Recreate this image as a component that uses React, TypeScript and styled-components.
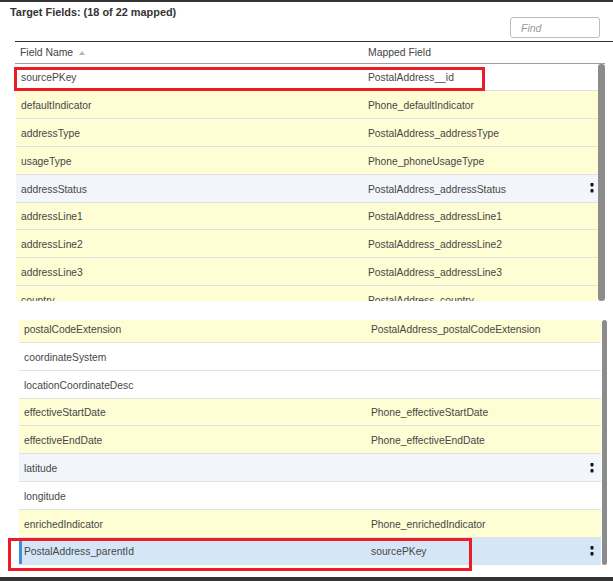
import React from "react";
import styled, { createGlobalStyle, css } from "styled-components";

const Global = createGlobalStyle`
  html, body { margin: 0; padding: 0; background: #fff; }
  body { font-family: "Liberation Sans", Arial, sans-serif; color: #444; }
  * { box-sizing: border-box; }
`;

const ROW_H = 27.8;

const Frame = styled.div`
  position: relative;
  width: 613px;
  height: 581px;
  display: flex;
  flex-direction: column;
  overflow: hidden;
  background: #fff;
`;

const DarkBar = styled.div<{ $h: number }>`
  height: ${(p) => p.$h}px;
  background: #333;
  flex: none;
`;

const TitleRow = styled.div`
  height: 39px;
  flex: none;
  display: flex;
  justify-content: space-between;
  align-items: flex-start;
  padding: 4px 13px 0 10px;
`;

const Title = styled.div`
  font-weight: bold;
  font-size: 10.9px;
  color: #333;
  line-height: 13px;
`;

const FindInput = styled.input`
  width: 90px;
  height: 21px;
  margin-top: 11px;
  border: 1px solid #bdbdbd;
  border-radius: 3px;
  padding: 0 0 0 10px;
  font-family: "Liberation Sans", Arial, sans-serif;
  font-size: 10.5px;
  outline: none;
  &::placeholder { color: #9a9a9a; font-style: italic; }
`;

const Header = styled.div`
  margin-left: 15px;
  height: 22.7px;
  flex: none;
  border-top: 1px solid #333;
  border-bottom: 1px solid #9e9e9e;
  display: grid;
  grid-template-columns: 348px 1fr;
  align-items: center;
  padding-top: 1px;
  font-size: 10.4px;
  color: #444;
  margin-right: 8px;
  position: relative;
  &::after {
    content: "";
    position: absolute;
    top: -1px;
    right: -8px;
    width: 8px;
    border-top: 1px solid #333;
  }
`;

const HeadCell = styled.div`
  padding-left: 5px;
  display: flex;
  align-items: center;
  gap: 6px;
`;

const Panel = styled.div<{ $left: number; $h: number; $vw: number; $thumbW: number }>`
  margin-left: ${(p) => p.$left}px;
  height: ${(p) => p.$h}px;
  flex: none;
  display: flex;
  width: ${(p) => p.$vw + p.$thumbW + 2}px;
`;

const Viewport = styled.div<{ $vw: number }>`
  width: ${(p) => p.$vw}px;
  height: 100%;
  overflow: hidden;
`;

const List = styled.div<{ $offset: number }>`
  margin-top: ${(p) => -p.$offset}px;
`;

const Thumb = styled.div<{ $w: number; $gap: number }>`
  width: ${(p) => p.$w}px;
  height: 100%;
  margin-left: ${(p) => p.$gap}px;
  background: #8c8c8c;
  border-radius: 3px;
`;

type Tone = "white" | "yellow" | "hover" | "selected";

const toneBg: Record<Tone, string> = {
  white: "#ffffff",
  yellow: "#fefdd3",
  hover: "#f2f6fb",
  selected: "#d5e6f7",
};

const Row = styled.div<{ $tone: Tone; $menuCol: number }>`
  height: ${ROW_H}px;
  display: grid;
  grid-template-columns: 347px 1fr ${(p) => p.$menuCol}px;
  align-items: center;
  padding-top: 1.5px;
  background: ${(p) => toneBg[p.$tone]};
  border-bottom: 1px solid #e1e1e1;
  font-size: 10.3px;
  color: #474747;
  ${(p) =>
    p.$tone === "selected" &&
    css`
      box-shadow: inset 3px 0 0 #3d8ee2;
    `}
`;

const Cell = styled.div`
  padding-left: 5px;
  white-space: nowrap;
  overflow: hidden;
`;

const KebabWrap = styled.div`
  display: flex;
  justify-content: flex-start;
  align-items: center;
  margin-top: -1.5px;
`;

const Gap = styled.div<{ $h: number }>`
  height: ${(p) => p.$h}px;
  flex: none;
`;

const Spacer = styled.div`
  flex: 1;
`;

const Highlight = styled.div<{ $x: number; $y: number; $w: number; $h: number }>`
  position: absolute;
  left: ${(p) => p.$x}px;
  top: ${(p) => p.$y}px;
  width: ${(p) => p.$w}px;
  height: ${(p) => p.$h}px;
  border: 3px solid #ec1c24;
  pointer-events: none;
`;

const Kebab = () => (
  <svg width="4" height="10" viewBox="0 0 4 10">
    <rect x="0.5" y="0" width="3" height="3.5" rx="0.8" fill="#111" />
    <rect x="0.5" y="6" width="3" height="3.5" rx="0.8" fill="#111" />
  </svg>
);

const SortUp = () => (
  <svg width="6" height="4" viewBox="0 0 6 4">
    <path d="M0 4 L3 0 L6 4 Z" fill="#b5b5b5" />
  </svg>
);

type RowData = { name: string; mapped: string; tone: Tone; menu?: boolean };

const topRows: RowData[] = [
  { name: "sourcePKey", mapped: "PostalAddress__id", tone: "white" },
  { name: "defaultIndicator", mapped: "Phone_defaultIndicator", tone: "yellow" },
  { name: "addressType", mapped: "PostalAddress_addressType", tone: "yellow" },
  { name: "usageType", mapped: "Phone_phoneUsageType", tone: "yellow" },
  { name: "addressStatus", mapped: "PostalAddress_addressStatus", tone: "hover", menu: true },
  { name: "addressLine1", mapped: "PostalAddress_addressLine1", tone: "yellow" },
  { name: "addressLine2", mapped: "PostalAddress_addressLine2", tone: "yellow" },
  { name: "addressLine3", mapped: "PostalAddress_addressLine3", tone: "yellow" },
  { name: "country", mapped: "PostalAddress_country", tone: "yellow" },
];

const bottomRows: RowData[] = [
  { name: "postalCodeExtension", mapped: "PostalAddress_postalCodeExtension", tone: "yellow" },
  { name: "coordinateSystem", mapped: "", tone: "white" },
  { name: "locationCoordinateDesc", mapped: "", tone: "white" },
  { name: "effectiveStartDate", mapped: "Phone_effectiveStartDate", tone: "yellow" },
  { name: "effectiveEndDate", mapped: "Phone_effectiveEndDate", tone: "yellow" },
  { name: "latitude", mapped: "", tone: "hover", menu: true },
  { name: "longitude", mapped: "", tone: "white" },
  { name: "enrichedIndicator", mapped: "Phone_enrichedIndicator", tone: "yellow" },
  { name: "PostalAddress_parentId", mapped: "sourcePKey", tone: "selected", menu: true },
];

const Rows = ({ rows, menuCol }: { rows: RowData[]; menuCol: number }) => (
  <>
    {rows.map((r) => (
      <Row key={r.name} $tone={r.tone} $menuCol={menuCol}>
        <Cell>{r.name}</Cell>
        <Cell>{r.mapped}</Cell>
        <KebabWrap>{r.menu && <Kebab />}</KebabWrap>
      </Row>
    ))}
  </>
);

export default function App() {
  return (
    <Frame>
      <Global />
      <DarkBar $h={2} />
      <TitleRow>
        <Title>Target Fields: (18 of 22 mapped)</Title>
        <FindInput placeholder="Find" />
      </TitleRow>
      <Header>
        <HeadCell>
          Field Name <SortUp />
        </HeadCell>
        <HeadCell>Mapped Field</HeadCell>
      </Header>
      <Panel $left={16} $h={237.3} $vw={582} $thumbW={7}>
        <Viewport $vw={582}>
          <List $offset={0}>
            <Rows rows={topRows} menuCol={8} />
          </List>
        </Viewport>
        <Thumb $w={7} $gap={0} />
      </Panel>
      <Gap $h={19} />
      <Panel $left={19} $h={245} $vw={582} $thumbW={5}>
        <Viewport $vw={582}>
          <List $offset={4.7}>
            <Rows rows={bottomRows} menuCol={11} />
          </List>
        </Viewport>
        <Thumb $w={5} $gap={1} />
      </Panel>
      <Spacer />
      <DarkBar $h={4} />
      <Highlight $x={13.5} $y={66.5} $w={471.5} $h={24.5} />
      <Highlight $x={7.5} $y={537.5} $w={464} $h={33} />
    </Frame>
  );
}
